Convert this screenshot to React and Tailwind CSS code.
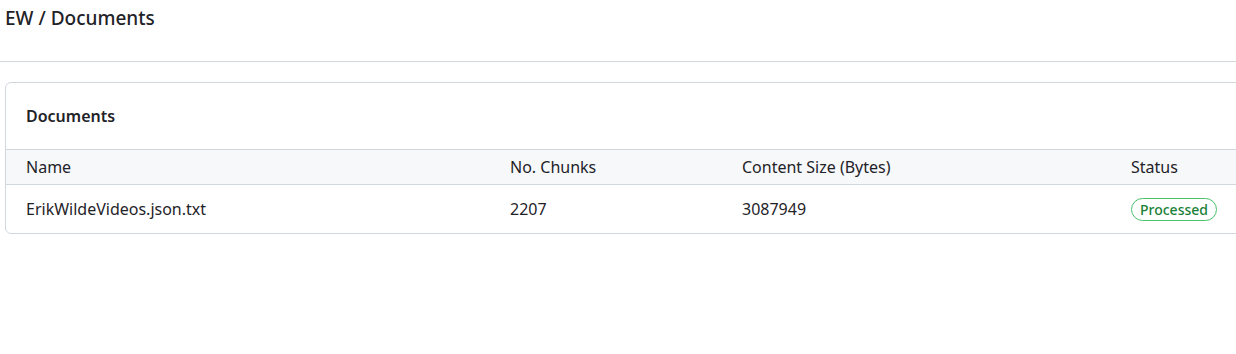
export default function App() {
  const font = { fontFamily: '"Noto Sans", "Open Sans", sans-serif' };
  return (
    <div className="w-[1236px] h-[354px] overflow-hidden bg-white text-[#1f2328]" style={font}>
      {/* Breadcrumb header */}
      <div className="h-[62px] border-b border-[#d0d7de] px-[5px] pt-[5px]">
        <h1 className="text-[19px] font-medium leading-[26px]">EW / Documents</h1>
      </div>

      {/* Documents card */}
      <div className="mt-[20px] ml-[5px] w-[1260px] border border-[#d0d7de] rounded-md overflow-hidden">
        <div className="h-[66px] flex items-center px-[20px]">
          <h2 className="text-[16px] font-semibold">Documents</h2>
        </div>
        <div className="flex h-[36px] items-center bg-[#f6f8fa] border-y border-[#d0d7de] text-[16px]">
          <div className="w-[484px] pl-[20px]">Name</div>
          <div className="w-[232px] pl-[20px]">No. Chunks</div>
          <div className="w-[389px] pl-[20px]">Content Size (Bytes)</div>
          <div className="flex-1 pl-[20px]">Status</div>
        </div>
        <div className="flex h-[48px] items-center text-[16px]">
          <div className="w-[484px] pl-[20px]">ErikWildeVideos.json.txt</div>
          <div className="w-[232px] pl-[20px]">2207</div>
          <div className="w-[389px] pl-[20px]">3087949</div>
          <div className="flex-1 pl-[20px]">
            <span className="inline-flex items-center h-[23px] px-[8px] rounded-full border border-[#4ac26b] text-[#1a7f37] text-[14px] font-medium leading-none">
              Processed
            </span>
          </div>
        </div>
      </div>
    </div>
  );
}
